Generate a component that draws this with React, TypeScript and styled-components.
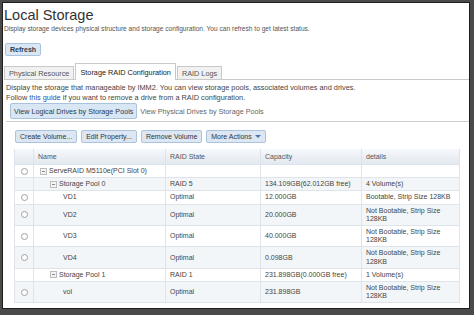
import styled, { createGlobalStyle } from "styled-components";

const GlobalStyle = createGlobalStyle`
  html, body {
    margin: 0;
    padding: 0;
    background: #4a4a4a;
    font-family: "Liberation Sans", Arial, sans-serif;
  }
`;

type Row = {
  kind: "controller" | "pool" | "volume";
  name: string;
  raid: string;
  capacity: string;
  details: string;
};

const rows: Row[] = [
  { kind: "controller", name: "ServeRAID M5110e(PCI Slot 0)", raid: "", capacity: "", details: "" },
  { kind: "pool", name: "Storage Pool 0", raid: "RAID 5", capacity: "134.109GB(62.012GB free)", details: "4 Volume(s)" },
  { kind: "volume", name: "VD1", raid: "Optimal", capacity: "12.000GB", details: "Bootable, Strip Size 128KB" },
  { kind: "volume", name: "VD2", raid: "Optimal", capacity: "20.000GB", details: "Not Bootable, Strip Size 128KB" },
  { kind: "volume", name: "VD3", raid: "Optimal", capacity: "40.000GB", details: "Not Bootable, Strip Size 128KB" },
  { kind: "volume", name: "VD4", raid: "Optimal", capacity: "0.098GB", details: "Not Bootable, Strip Size 128KB" },
  { kind: "pool", name: "Storage Pool 1", raid: "RAID 1", capacity: "231.898GB(0.000GB free)", details: "1 Volume(s)" },
  { kind: "volume", name: "vol", raid: "Optimal", capacity: "231.898GB", details: "Not Bootable, Strip Size 128KB" },
];

export default function App() {
  return (
    <>
      <GlobalStyle />
      <Frame>
        <Panel>
          <Title>Local Storage</Title>
          <Subtitle>
            Display storage devices physical structure and storage configuration. You can refresh to get latest status.
          </Subtitle>
          <RefreshButton>Refresh</RefreshButton>

          <TabStrip>
            <Tab>Physical Resource</Tab>
            <Tab active>Storage RAID Configuration</Tab>
            <Tab>RAID Logs</Tab>
          </TabStrip>

          <TabBody>
            <Description>
              Display the storage that manageable by IMM2. You can view storage pools, associated volumes and drives.
              <br />
              Follow <GuideLink>this guide</GuideLink> if you want to remove a drive from a RAID configuration.
            </Description>

            <SubTabs>
              <SubTab active>View Logical Drives by Storage Pools</SubTab>
              <SubTab>View Physical Drives by Storage Pools</SubTab>
            </SubTabs>

            <Actions>
              <ActionButton>Create Volume...</ActionButton>
              <ActionButton>Edit Property...</ActionButton>
              <ActionButton>Remove Volume</ActionButton>
              <ActionButton>
                More Actions <Caret />
              </ActionButton>
            </Actions>

            <Table>
              <colgroup>
                <col style={{ width: 19 }} />
                <col style={{ width: 132 }} />
                <col style={{ width: 95 }} />
                <col style={{ width: 101 }} />
                <col style={{ width: 98 }} />
              </colgroup>
              <thead>
                <tr>
                  <Th />
                  <Th>Name</Th>
                  <Th>RAID State</Th>
                  <Th>Capacity</Th>
                  <Th>details</Th>
                </tr>
              </thead>
              <tbody>
                {rows.map((r, i) => (
                  <Tr key={r.name} striped={i % 2 === 1}>
                    <RadioCell>{r.kind !== "pool" && <Radio />}</RadioCell>
                    <Td>
                      <NameWrap level={r.kind === "controller" ? 0 : r.kind === "pool" ? 1 : 2}>
                        {r.kind !== "volume" && <Collapse />}
                        {r.name}
                      </NameWrap>
                    </Td>
                    <Td>{r.raid}</Td>
                    <Td>{r.capacity}</Td>
                    <DetailsTd>{r.details}</DetailsTd>
                  </Tr>
                ))}
              </tbody>
            </Table>
          </TabBody>
        </Panel>
      </Frame>
    </>
  );
}

const Frame = styled.div`
  width: 474px;
  height: 315px;
  padding: 2px 4px 6px 2px;
  box-sizing: border-box;
  background: #4a4a4a;
`;

const Panel = styled.div`
  height: 100%;
  box-sizing: border-box;
  background: #fff;
  border: 1px solid #1e1e1e;
  display: flex;
  flex-direction: column;
  align-items: flex-start;
  padding: 3px 0 0 1px;
  color: #444;
  font-size: 7px;
  overflow: hidden;
`;

const Title = styled.div`
  font-size: 14.5px;
  line-height: 18px;
  color: #333;
`;

const Subtitle = styled.div`
  font-size: 6.6px;
  line-height: 9px;
  color: #555;
`;

const RefreshButton = styled.div`
  margin: 10px 0 0 1px;
  height: 13px;
  box-sizing: border-box;
  padding: 0 4px;
  display: flex;
  align-items: center;
  background: #d9e6f4;
  border: 1px solid #a9c3df;
  border-radius: 2px;
  font-weight: bold;
  color: #2b3a4f;
`;

const TabStrip = styled.div`
  margin-top: 7px;
  align-self: stretch;
  display: flex;
  align-items: flex-end;
  gap: 1px;
  border-bottom: 1px solid #c9c9c9;
`;

const Tab = styled.div<{ active?: boolean }>`
  height: ${(p) => (p.active ? 17 : 13)}px;
  padding: 0 4px;
  display: flex;
  align-items: center;
  box-sizing: border-box;
  font-size: 7.3px;
  color: ${(p) => (p.active ? "#222" : "#555")};
  background: ${(p) => (p.active ? "#fff" : "#f1f1f1")};
  border: 1px solid #c9c9c9;
  border-bottom: none;
  margin-bottom: ${(p) => (p.active ? "-1px" : "0")};
`;

const TabBody = styled.div`
  align-self: stretch;
  flex: 1;
  padding: 3px 0 0 2px;
  display: flex;
  flex-direction: column;
  align-items: flex-start;
`;

const Description = styled.div`
  font-size: 7.35px;
  line-height: 10px;
  color: #444;
`;

const GuideLink = styled.span`
  color: #2f4fa8;
`;

const SubTabs = styled.div`
  margin-top: 0;
  align-self: stretch;
  display: flex;
  align-items: center;
  gap: 3px;
  padding: 0 0 2px 4px;
  border-bottom: 1px solid #cfcfcf;
`;

const SubTab = styled.div<{ active?: boolean }>`
  height: 16px;
  box-sizing: border-box;
  display: flex;
  align-items: center;
  padding: 0 ${(p) => (p.active ? 3 : 0)}px;
  font-size: 7.2px;
  color: ${(p) => (p.active ? "#2b3a4f" : "#666")};
  background: ${(p) => (p.active ? "#d9e6f4" : "transparent")};
  border: ${(p) => (p.active ? "1px solid #a9c3df" : "none")};
  border-radius: 2px;
`;

const Actions = styled.div`
  margin: 8px 0 0 9px;
  display: flex;
  gap: 4px;
`;

const ActionButton = styled.div`
  height: 13px;
  box-sizing: border-box;
  padding: 0 4px;
  display: flex;
  align-items: center;
  gap: 3px;
  background: #dce7f3;
  border: 1px solid #abc3dd;
  border-radius: 2px;
  color: #333;
`;

const Caret = styled.span`
  width: 0;
  height: 0;
  border-left: 3px solid transparent;
  border-right: 3px solid transparent;
  border-top: 3px solid #4a74a8;
`;

const Table = styled.table`
  margin: 6px 0 0 8px;
  width: 445px;
  table-layout: fixed;
  border-collapse: collapse;
  color: #444;
  font-size: 7px;
`;

const Th = styled.th`
  height: 15px;
  padding: 0 4px;
  text-align: left;
  font-weight: normal;
  color: #555;
  background: linear-gradient(#f6f8fb, #e2e8ef);
  border: 1px solid #dde3ea;
  border-top: none;
`;

const Tr = styled.tr<{ striped: boolean }>`
  background: ${(p) => (p.striped ? "#f3f6f9" : "#fff")};
`;

const Td = styled.td`
  padding: 2px 4px;
  line-height: 8.2px;
  border: 1px solid #dfe4ea;
  vertical-align: middle;
`;

const DetailsTd = styled(Td)`
  padding-right: 2px;
`;

const RadioCell = styled(Td)`
  padding: 0;
  text-align: center;
`;

const Radio = styled.span`
  display: inline-block;
  width: 5px;
  height: 5px;
  border: 1px solid #a0a0a0;
  border-radius: 50%;
  background: #fff;
  vertical-align: middle;
`;

const NameWrap = styled.div<{ level: number }>`
  display: flex;
  align-items: center;
  gap: 2px;
  padding-left: ${(p) => [2, 12, 25][p.level]}px;
`;

const Collapse = styled.span`
  position: relative;
  width: 5px;
  height: 5px;
  border: 1px solid #bdbdbd;
  background: #f4f4f4;
  &::after {
    content: "";
    position: absolute;
    left: 1px;
    right: 1px;
    top: 2px;
    height: 1px;
    background: #888;
  }
`;
